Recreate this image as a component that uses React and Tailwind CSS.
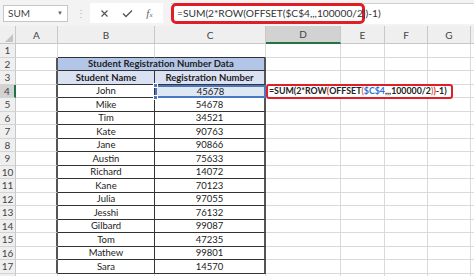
import React from 'react';

const students = [
  ['John', '45678'],
  ['Mike', '54678'],
  ['Tim', '34521'],
  ['Kate', '90763'],
  ['Jane', '90866'],
  ['Austin', '75633'],
  ['Richard', '14072'],
  ['Kane', '70123'],
  ['Julia', '97055'],
  ['Jesshi', '76132'],
  ['Gilbard', '99087'],
  ['Tom', '47235'],
  ['Mathew', '99801'],
  ['Sara', '14570'],
];

const rowCls =
  'grid grid-cols-[16px_42px_97px_111px_75px_44px_43px_43px_3px] grid-rows-[13.5px] h-[13.5px] text-[9.5px] leading-none';
const grid = 'border-r border-b border-[#dadada]';

const RowHead = ({ n, active }) => (
  <div
    className={`flex items-center justify-center text-[10px] text-[#444] border-b border-[#d4d4d4] ${
      active ? 'bg-[#d2d2d2] border-r-2 border-r-[#217346]' : 'bg-[#efefef] border-r border-r-[#c8c8c8]'
    }`}
  >
    {n}
  </div>
);

const Blank = () => (
  <>
    <div className={grid} />
    <div className={grid} />
    <div className={grid} />
    <div className={grid} />
    <div className="border-b border-[#dadada]" />
  </>
);

const Formula = () => (
  <>
    =SUM(2*ROW<span className="text-[#d8342b]">(</span>OFFSET<span className="text-[#e0663f]">(</span>
    <span className="text-[#2f6fd0]">$C$4</span>,,,100000/2<span className="text-[#e0663f]">)</span>
    <span className="text-[#d8342b]">)</span>-1)
  </>
);

export default function App() {
  return (
    <div className="w-[474px] h-[276px] overflow-hidden bg-white font-['Lato',sans-serif] text-[#222] leading-none">
      {/* formula bar */}
      <div className="h-[26px] bg-[#f3f3f3] flex items-center">
        <div className="ml-[3px] w-[65px] h-[17px] bg-white border border-[#c6c6c6] flex items-center justify-between px-[4px]">
          <span className="text-[10px] text-[#444]">SUM</span>
          <span className="text-[6px] text-[#666]">▼</span>
        </div>
        <div className="w-[22px] pl-[4px] flex justify-center text-[#b5b5b5] text-[10px]">⋮</div>
        <div className="w-[73px] h-[20px] bg-white flex items-center justify-around px-[4px]">
          <svg width="9" height="9" viewBox="0 0 9 9" fill="none" stroke="#555" strokeWidth="1.2">
            <path d="M1.5 1.5l6 6M7.5 1.5l-6 6" />
          </svg>
          <svg width="11" height="9" viewBox="0 0 11 9" fill="none" stroke="#555" strokeWidth="1.3">
            <path d="M1 4.5l3 3L10 1.5" />
          </svg>
          <span className="font-['Liberation_Serif',serif] italic text-[11px] text-[#666]">
            f<span className="text-[7px]">x</span>
          </span>
        </div>
        <div className="ml-[8px] flex-1 h-[21px] bg-white border-t border-[#d0d0d0] flex items-center">
          <div className="w-[194px] h-[21px] border-[3px] border-[#e01e26] rounded-[5px] flex items-center pl-[3px] text-[10.2px] text-[#333] whitespace-nowrap">
            =SUM(2*ROW(OFFSET($C$4,,,100000/2))-1)
          </div>
        </div>
      </div>

      {/* column headers */}
      <div className="grid grid-cols-[16px_42px_97px_111px_75px_44px_43px_43px_3px] grid-rows-[18px] h-[18px] bg-[#efefef] text-[10px] text-[#444] border-b border-[#c8c8c8]">
        <div className="relative border-r border-[#c8c8c8]">
          <div className="absolute right-[2px] bottom-[2px] w-0 h-0 border-l-[8px] border-l-transparent border-b-[8px] border-b-[#c4c4c4]" />
        </div>
        <div className="flex items-center justify-center border-r border-[#c8c8c8]">A</div>
        <div className="flex items-center justify-center border-r border-[#c8c8c8]">B</div>
        <div className="flex items-center justify-center border-r border-[#c8c8c8]">C</div>
        <div className="flex items-center justify-center border-r border-[#c8c8c8] bg-[#d2d2d2] border-b-2 border-b-[#217346]">D</div>
        <div className="flex items-center justify-center border-r border-[#c8c8c8]">E</div>
        <div className="flex items-center justify-center border-r border-[#c8c8c8]">F</div>
        <div className="flex items-center justify-center border-r border-[#c8c8c8]">G</div>
        <div />
      </div>

      {/* row 1 */}
      <div className={rowCls}>
        <RowHead n={1} />
        <div className={grid} />
        <div className="border-r border-[#dadada] border-b border-b-[#333]" />
        <div className="border-r border-[#dadada] border-b border-b-[#333]" />
        <Blank />
      </div>

      {/* row 2 */}
      <div className={rowCls}>
        <RowHead n={2} />
        <div className="border-b border-[#dadada] border-r-2 border-r-[#555]" />
        <div className="col-span-2 bg-[#b4c6e7] border-b border-[#333] border-r-2 border-r-[#555] flex items-center justify-center font-bold">
          Student Registration Number Data
        </div>
        <Blank />
      </div>

      {/* row 3 */}
      <div className={rowCls}>
        <RowHead n={3} />
        <div className="border-b border-[#dadada] border-r-2 border-r-[#555]" />
        <div className="bg-[#d9e1f2] border-b border-r border-[#333] flex items-center justify-center font-bold">
          Student Name
        </div>
        <div className="bg-[#d9e1f2] border-b border-[#333] border-r-2 border-r-[#555] flex items-center justify-center font-bold">
          Registration Number
        </div>
        <Blank />
      </div>

      {students.map(([name, num], i) => {
        const n = i + 4;
        const first = n === 4;
        return (
          <div key={n} className={rowCls}>
            <RowHead n={n} active={first} />
            <div className="border-b border-[#dadada] border-r-2 border-r-[#555]" />
            <div className="border-b border-r border-[#333] flex items-center justify-center">{name}</div>
            {first ? (
              <div className="relative bg-[#dfe7f3] border-2 border-[#4a78c2] flex items-center justify-center">
                {num}
                <div className="absolute left-[-4px] top-[-4px] w-[5px] h-[5px] bg-[#4a78c2] border border-white" />
                <div className="absolute left-[-4px] bottom-[-4px] w-[5px] h-[5px] bg-[#4a78c2] border border-white" />
              </div>
            ) : (
              <div className="border-b border-[#333] border-r-2 border-r-[#555] flex items-center justify-center">{num}</div>
            )}
            {first ? (
              <>
                <div className="relative border-r border-b border-[#dadada]">
                  <div className="absolute left-0 top-[-1px] z-10 w-[187px] h-[15px] bg-white border-2 border-[#e01e26] rounded-[3px] flex items-center pl-[1px] text-[8.8px] font-bold text-[#222] whitespace-nowrap">
                    <Formula />
                  </div>
                </div>
                <div className={grid} />
                <div className={grid} />
                <div className={grid} />
                <div className="border-b border-[#dadada]" />
              </>
            ) : (
              <Blank />
            )}
          </div>
        );
      })}

      {/* row 18 (partly visible) */}
      <div className={rowCls}>
        <RowHead n="" />
        <div className={grid} />
        <div className={grid} />
        <div className={grid} />
        <Blank />
      </div>
    </div>
  );
}
